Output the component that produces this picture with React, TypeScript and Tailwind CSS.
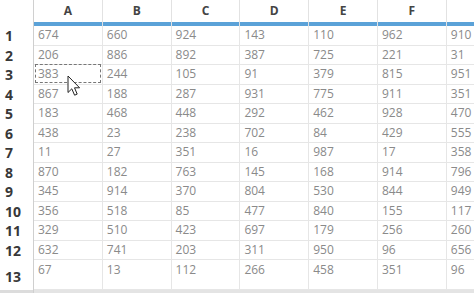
const data: number[][] = [
  [674, 660, 924, 143, 110, 962, 910],
  [206, 886, 892, 387, 725, 221, 31],
  [383, 244, 105, 91, 379, 815, 951],
  [867, 188, 287, 931, 775, 911, 351],
  [183, 468, 448, 292, 462, 928, 470],
  [438, 23, 238, 702, 84, 429, 555],
  [11, 27, 351, 16, 987, 17, 358],
  [870, 182, 763, 145, 168, 914, 796],
  [345, 914, 370, 804, 530, 844, 949],
  [356, 518, 85, 477, 840, 155, 117],
  [329, 510, 423, 697, 179, 256, 260],
  [632, 741, 203, 311, 950, 96, 656],
  [67, 13, 112, 266, 458, 351, 96],
];

const cols = ["A", "B", "C", "D", "E", "F", ""];

function Cursor() {
  return (
    <svg className="absolute left-[67px] top-[75px]" width="14" height="22" viewBox="0 0 14 22">
      <path
        d="M1 1 L1 17.5 L4.8 13.8 L7.6 20.2 L10.2 19.1 L7.5 12.8 L12.6 12.8 Z"
        fill="#fff"
        stroke="#222"
        strokeWidth="1"
        strokeLinejoin="round"
      />
    </svg>
  );
}

export default function App() {
  return (
    <div
      className="relative w-[474px] h-[293px] overflow-hidden bg-white"
      style={{ fontFamily: '"Open Sans", "Noto Sans", sans-serif' }}
    >
      {/* header */}
      <div className="flex h-[26px]">
        <div className="w-[34px] shrink-0 border-r border-[#d0d0d0]" />
        {cols.map((c, i) => (
          <div
            key={i}
            className="w-[68.8px] shrink-0 flex flex-col border-r border-[#e2e2e2]"
          >
            <div className="h-[22px] flex items-center justify-center text-[12px] font-bold text-[#444]">
              {c}
            </div>
            <div className="h-[4px] bg-[#5ba2d8]" />
          </div>
        ))}
      </div>

      {data.map((row, r) => {
        const last = r === data.length - 1;
        return (
          <div key={r} className={`flex ${last ? "h-[30px]" : "h-[19.5px]"}`}>
            <div
              className={`w-[34px] shrink-0 border-r border-[#cfcfcf] pl-[5px] flex items-center text-[14px] font-bold text-[#383838] ${
                last ? "pt-[3px]" : ""
              }`}
            >
              {r + 1}
            </div>
            {row.map((v, c) => (
              <div
                key={c}
                className={`relative w-[68.8px] shrink-0 border-r border-b border-[#e6e6e6] pl-[4px] flex text-[12px] text-[#8a8a8a] ${
                  last ? "items-start pt-[1px]" : "items-center"
                }`}
              >
                {v}
                {r === 2 && c === 0 && (
                  <div className="absolute inset-[1px] -top-[1px] border border-dashed border-[#777]" />
                )}
              </div>
            ))}
          </div>
        );
      })}

      <div className="flex h-[3px]">
        <div className="w-[34px] shrink-0 bg-[#dcdcdc] border-r border-[#cfcfcf]" />
        <div className="flex-1 bg-[#e4e4e4]" />
      </div>

      <Cursor />
    </div>
  );
}
